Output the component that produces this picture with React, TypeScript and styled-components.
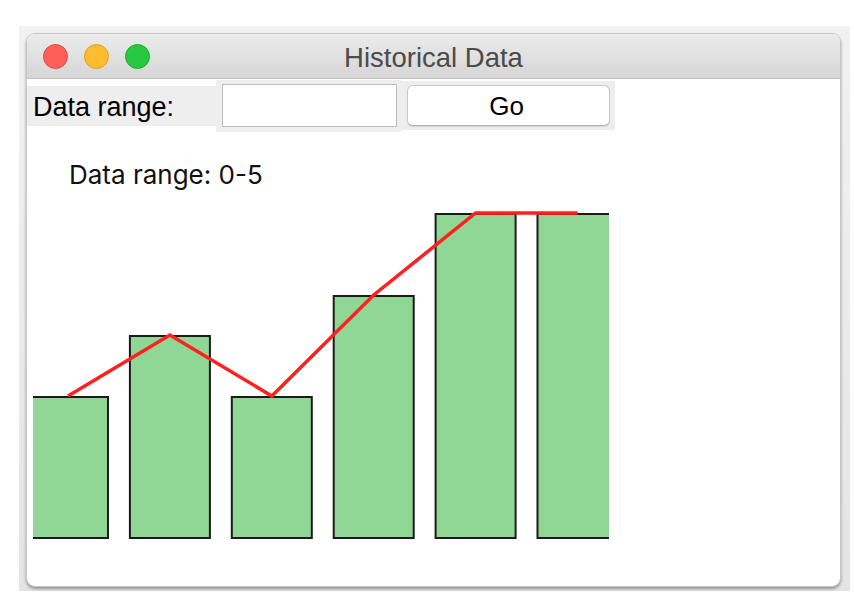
import React from "react";
import styled, { createGlobalStyle } from "styled-components";

const Global = createGlobalStyle`
  html, body { margin: 0; padding: 0; background: #ffffff; }
  * { box-sizing: border-box; }
`;

const Page = styled.div`
  width: 854px;
  height: 596px;
  padding: 26px 0 0 19px;
`;

const Frame = styled.div`
  width: 831px;
  height: 565px;
  background: linear-gradient(#f2f2f2, #e4e4e4);
  padding: 7px 0 0 7px;
`;

const Window = styled.div`
  width: 815px;
  height: 554px;
  background: #ffffff;
  border: 1px solid #c6c6c6;
  border-radius: 9px;
  overflow: hidden;
  box-shadow: 0 2px 3px rgba(0, 0, 0, 0.35);
  display: flex;
  flex-direction: column;
`;

const TitleBar = styled.div`
  position: relative;
  height: 45px;
  flex: none;
  background: linear-gradient(#ececec, #d6d6d6);
  border-bottom: 1px solid #c2c2c2;
  display: flex;
  align-items: center;
  justify-content: center;
  padding-top: 3px;
`;

const Lights = styled.div`
  position: absolute;
  left: 16px;
  top: 10px;
  display: flex;
  gap: 16px;
`;

const Light = styled.span<{ $fill: string; $edge: string }>`
  width: 25px;
  height: 25px;
  border-radius: 50%;
  background: ${(p) => p.$fill};
  border: 1px solid ${(p) => p.$edge};
`;

const Title = styled.div`
  font-family: "Liberation Sans", Arial, sans-serif;
  font-size: 27.5px;
  color: #4b4b4b;
`;

const Toolbar = styled.div`
  height: 53px;
  display: flex;
  align-items: center;
  flex: none;
`;

const LabelPanel = styled.div`
  width: 189px;
  height: 40px;
  background: #eeeeee;
  display: flex;
  align-items: center;
  padding: 3px 0 0 6px;
  font-family: "Liberation Sans", Arial, sans-serif;
  font-size: 27px;
  color: #000;
`;

const FieldPanel = styled.div<{ $w: number; $h: number }>`
  width: ${(p) => p.$w}px;
  height: ${(p) => p.$h}px;
  background: #eeeeee;
  display: flex;
  align-items: center;
  padding-left: 6px;
`;

const Input = styled.div`
  width: 175px;
  height: 43px;
  background: #ffffff;
  border: 1px solid #bdbdbd;
`;

const Button = styled.div`
  width: 203px;
  height: 41px;
  background: #ffffff;
  border: 1px solid #c9c9c9;
  border-bottom-color: #b4b4b4;
  border-radius: 6px;
  box-shadow: 0 1px 1px rgba(0, 0, 0, 0.12);
  display: flex;
  align-items: center;
  justify-content: center;
  padding: 2px 4px 0 0;
  font-family: "Liberation Sans", Arial, sans-serif;
  font-size: 26px;
  color: #000;
`;

const Body = styled.div`
  padding: 0 0 0 6px;
  display: flex;
  flex-direction: column;
`;

const RangeText = styled.div`
  margin: 28px 0 0 36px;
  font-family: Inter, "Liberation Sans", sans-serif;
  font-size: 26px;
  line-height: 30px;
  color: #111;
`;

const Chart = styled.svg`
  display: block;
  margin-top: 10px;
  overflow: hidden;
`;

const tops = [196, 135, 196, 95, 13, 13];
const bottom = 339;
const pitch = 101.9;

export default function App() {
  const pts = tops.map((t, i) => `${35 + pitch * i},${t}`).join(" ");
  return (
    <>
      <Global />
      <Page>
        <Frame>
          <Window>
            <TitleBar>
              <Lights>
                <Light $fill="#fe5f57" $edge="#e2463f" />
                <Light $fill="#febc2e" $edge="#dfa023" />
                <Light $fill="#28c840" $edge="#1dad2b" />
              </Lights>
              <Title>Historical Data</Title>
            </TitleBar>
            <Toolbar>
              <LabelPanel>Data range:</LabelPanel>
              <FieldPanel $w={185} $h={52}>
                <Input />
              </FieldPanel>
              <FieldPanel $w={214} $h={49}>
                <Button>Go</Button>
              </FieldPanel>
            </Toolbar>
            <Body>
              <RangeText>Data range: 0-5</RangeText>
              <Chart width={576} height={345} viewBox="0 0 576 345">
                {tops.map((t, i) => (
                  <rect
                    key={i}
                    x={-6 + pitch * i + 1}
                    y={t + 1}
                    width={80}
                    height={bottom - t - 2}
                    fill="#90d795"
                    stroke="#1b1b1b"
                    strokeWidth={2}
                  />
                ))}
                <polyline
                  points={pts}
                  fill="none"
                  stroke="#ff2121"
                  strokeWidth={3.5}
                  strokeLinejoin="miter"
                />
              </Chart>
            </Body>
          </Window>
        </Frame>
      </Page>
    </>
  );
}
